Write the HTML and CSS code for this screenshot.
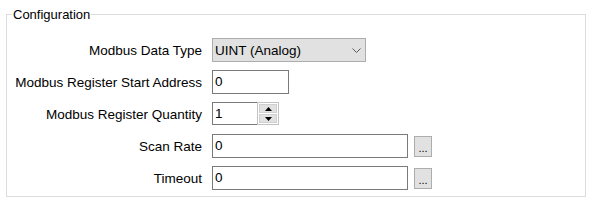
FILE: index.html
```html
<!DOCTYPE html>
<html>
<head>
<meta charset="utf-8">
<link rel="stylesheet" href="styles.css">
</head>
<body>
<fieldset class="group">
  <legend class="group-title">Configuration</legend>
  <div class="form">
    <div class="label">Modbus Data Type</div>
    <div class="combo">
      <span class="combo-text">UINT (Analog)</span>
      <svg class="chev" width="9" height="5" viewBox="0 0 9 5"><path d="M0.5 0.5 L4.5 4.5 L8.5 0.5" fill="none" stroke="#5a5a5a" stroke-width="1"/></svg>
    </div>

    <div class="label">Modbus Register Start Address</div>
    <div class="textbox short">0</div>

    <div class="label">Modbus Register Quantity</div>
    <div class="spin">
      <div class="spin-text">1</div>
      <div class="spin-btns">
        <div class="spin-btn"><svg width="7" height="4" viewBox="0 0 7 4"><path d="M3.5 0 L7 4 L0 4 Z" fill="#000"/></svg></div>
        <div class="spin-btn"><svg width="7" height="4" viewBox="0 0 7 4"><path d="M0 0 L7 0 L3.5 4 Z" fill="#000"/></svg></div>
      </div>
    </div>

    <div class="label">Scan Rate</div>
    <div class="field-row">
      <div class="textbox long">0</div>
      <div class="dots">...</div>
    </div>

    <div class="label">Timeout</div>
    <div class="field-row">
      <div class="textbox long">0</div>
      <div class="dots">...</div>
    </div>
  </div>
</fieldset>
</body>
</html>
```
FILE: styles.css
```css
html, body {
  margin: 0;
  padding: 0;
  background: #ffffff;
}
body {
  font-family: "Liberation Sans", Arial, sans-serif;
  font-size: 13px;
  color: #000000;
  width: 592px;
  height: 204px;
  overflow: hidden;
}
.group {
  box-sizing: border-box;
  width: 580px;
  margin: 7px 0 0 6px;
  padding: 0 0 6px 0;
  border: 1px solid #dcdcdc;
  min-width: 0;
}
.group-title {
  padding: 0 1px;
  margin-left: 5px;
  line-height: 15px;
  height: 15px;
}
.form {
  display: grid;
  grid-template-columns: 195px auto;
  grid-auto-rows: 24px;
  column-gap: 10px;
  row-gap: 8px;
  padding-top: 16px;
  align-items: center;
  justify-items: start;
  font-size: 13.5px;
}
.label {
  justify-self: end;
  line-height: 15px;
  white-space: nowrap;
}
.combo {
  box-sizing: border-box;
  width: 154px;
  height: 24px;
  background: #e1e1e1;
  border: 1px solid #adadad;
  display: flex;
  align-items: center;
  justify-content: space-between;
  padding: 0 4px 0 2px;
}
.combo-text {
  line-height: 15px;
}
.chev {
  display: block;
}
.textbox {
  box-sizing: border-box;
  height: 24px;
  border: 1px solid #7a7a7a;
  background: #ffffff;
  padding: 0 2px;
  line-height: 20px;
  display: flex;
  align-items: center;
}
.short {
  width: 77px;
}
.long {
  width: 196px;
}
.spin {
  box-sizing: border-box;
  width: 67px;
  height: 23px;
  display: flex;
  align-self: start;
}
.spin-text {
  box-sizing: border-box;
  flex: 1;
  border: 1px solid #7a7a7a;
  border-right: none;
  padding: 0 2px;
  display: flex;
  align-items: center;
}
.spin-btns {
  box-sizing: border-box;
  width: 22px;
  border: 1px solid #c2c2c2;
  padding: 1px;
  display: flex;
  flex-direction: column;
  gap: 1px;
  background: #ffffff;
}
.spin-btn {
  flex: 1;
  background: #e1e1e1;
  border: 1px solid #d0d0d0;
  display: flex;
  align-items: center;
  justify-content: center;
}
.spin-btn svg {
  display: block;
}
.field-row {
  display: flex;
  align-items: center;
  gap: 6px;
}
.dots {
  box-sizing: border-box;
  width: 18px;
  height: 21px;
  background: #e1e1e1;
  border: 1px solid #adadad;
  font-size: 11px;
  line-height: 22px;
  text-align: center;
  color: #000000;
}
```
